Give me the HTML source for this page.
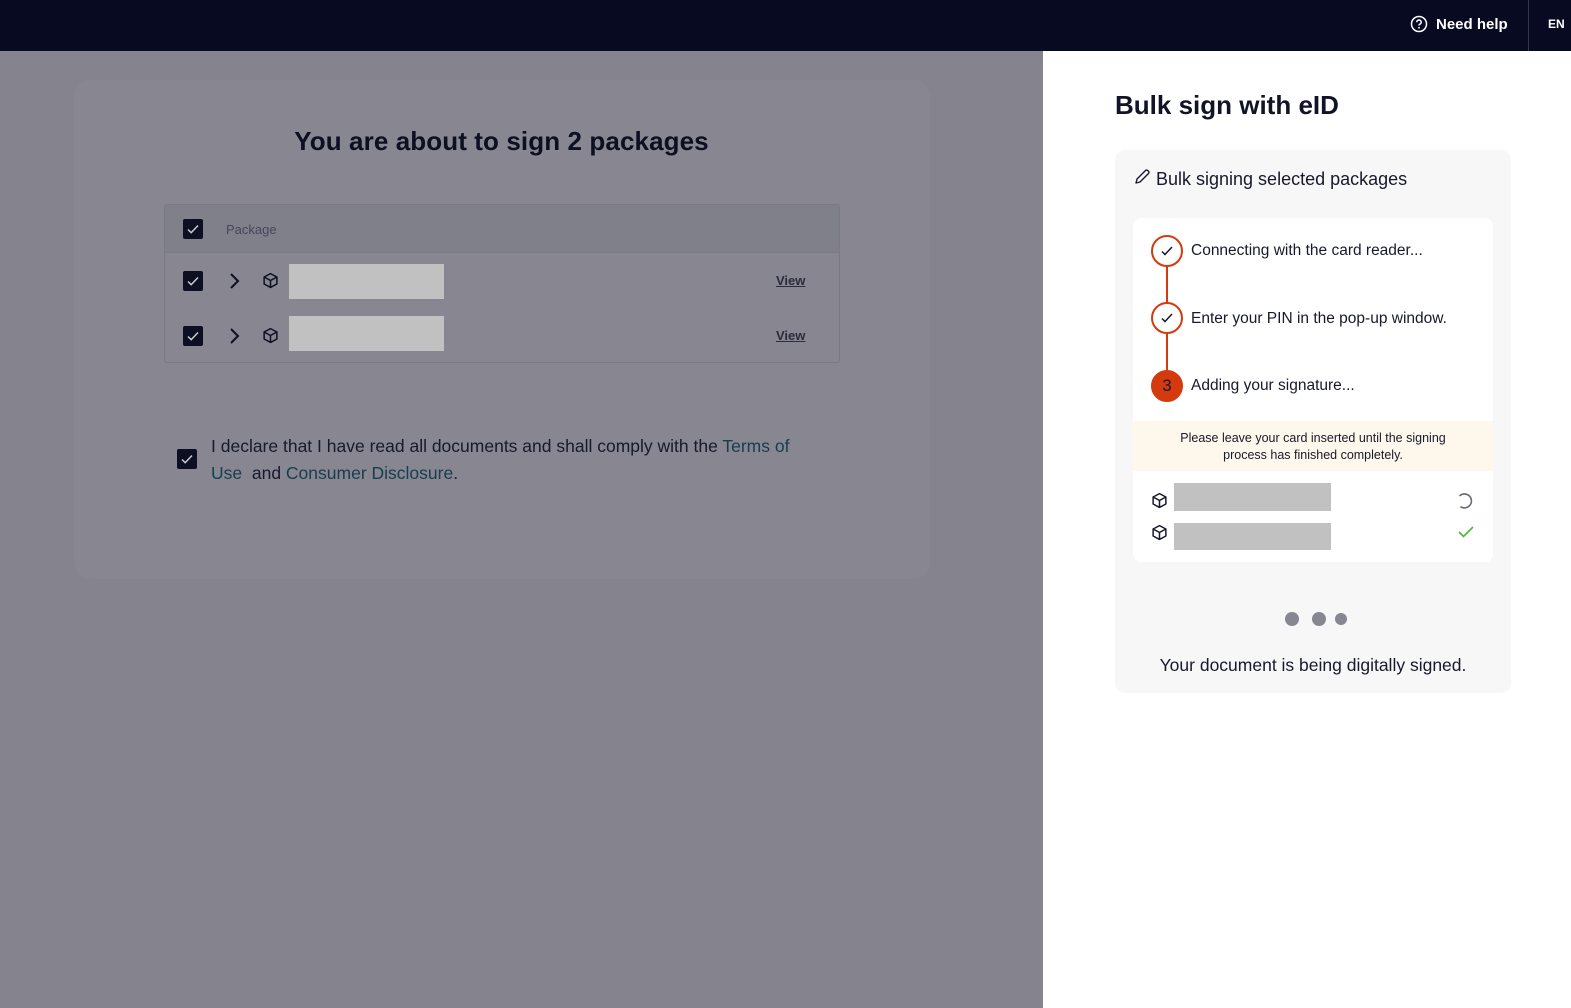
<!DOCTYPE html>
<html><head><meta charset="utf-8">
<style>
*{box-sizing:border-box;margin:0;padding:0}
body{width:1571px;height:1008px;overflow:hidden;font-family:"Liberation Sans",sans-serif;background:#84838e;position:relative}
.top{position:absolute;left:0;top:0;width:1571px;height:51px;background:#070a20;color:#fff}
.help{position:absolute;left:1410px;top:15px;font-weight:bold;font-size:15px;display:flex;align-items:center;gap:8px}
.sep{position:absolute;left:1528px;top:0;width:1px;height:51px;background:#333649}
.en{position:absolute;left:1548px;top:17px;font-weight:bold;font-size:12px}
.left{position:absolute;left:0;top:51px;width:1043px;height:957px;background:#84838e}
.card{position:absolute;left:74px;top:80px;width:856px;height:499px;background:#878691;border-radius:16px}
h1{position:absolute;left:0;width:1003px;top:126px;text-align:center;font-size:26px;font-weight:bold;color:#0d0f22;letter-spacing:0.1px}
.tbl{position:absolute;left:164px;top:204px;width:676px;height:159px;border:1px solid #7a7985;border-radius:3px;background:#878691}
.hdr{height:48px;background:#80808b;border-bottom:1px solid #7c7b87}
.cb{position:absolute;width:20px;height:20px;background:#0d0f22;border-radius:2px}
.cb svg{position:absolute;left:2px;top:2px}
.blk{position:absolute;background:#c1c1c1}
.view{position:absolute;left:776px;font-size:13px;color:#2a2c3c;text-decoration:underline;font-weight:bold}
.decl{position:absolute;left:211px;top:433px;width:615px;font-size:17.5px;line-height:27px;color:#171a2c}
.decl a{color:#163e4e;text-decoration:none}
.right{position:absolute;left:1043px;top:51px;width:528px;height:957px;background:#fff}
h2{position:absolute;left:1115px;top:90px;font-size:26px;font-weight:bold;color:#111326}
.panel{position:absolute;left:1115px;top:150px;width:396px;height:543px;background:#f7f7f7;border-radius:10px}
.ptitle{position:absolute;left:1156px;top:169px;font-size:18px;color:#17192c}
.inner{position:absolute;left:1133px;top:218px;width:360px;height:344px;background:#fff;border-radius:8px;overflow:hidden}
.step{position:absolute;left:1191px;font-size:15.5px;color:#17192c}
.circ{position:absolute;left:1151px;width:32px;height:32px;border:2px solid #d53a0f;border-radius:50%;background:#fff}
.line{position:absolute;left:1166px;width:2px;background:#d53a0f}
.warn{position:absolute;left:1133px;top:421px;width:360px;height:50px;background:#fef7eb;font-size:12.5px;text-align:center;color:#17192c;padding-top:9px;line-height:17px}
.dot{position:absolute;border-radius:50%;background:#878793}
</style></head><body>
<div class="top">
  <div class="help"><svg width="18" height="18" viewBox="0 0 18 18"><circle cx="9" cy="9" r="7.5" fill="none" stroke="#fff" stroke-width="1.5"/><path d="M6.8 7.2a2.2 2.2 0 1 1 3 2c-.6.3-.8.7-.8 1.3" fill="none" stroke="#fff" stroke-width="1.5"/><circle cx="9" cy="12.8" r="0.9" fill="#fff"/></svg>Need help</div>
  <div class="sep"></div><div class="en">EN</div>
</div>
<div class="left"></div>
<div class="card"></div>
<h1>You are about to sign 2 packages</h1>
<div class="tbl"><div class="hdr"></div></div>
<div class="cb" style="left:183px;top:219px"><svg width="16" height="16" viewBox="0 0 16 16"><path d="M3 8.5l3.2 3.2L13 4.5" fill="none" stroke="#c9c9d0" stroke-width="1.5"/></svg></div>
<div style="position:absolute;left:226px;top:222px;font-size:13px;color:#45475a">Package</div>
<div class="cb" style="left:183px;top:271px"><svg width="16" height="16" viewBox="0 0 16 16"><path d="M3 8.5l3.2 3.2L13 4.5" fill="none" stroke="#c9c9d0" stroke-width="1.5"/></svg></div>
<div class="cb" style="left:183px;top:326px"><svg width="16" height="16" viewBox="0 0 16 16"><path d="M3 8.5l3.2 3.2L13 4.5" fill="none" stroke="#c9c9d0" stroke-width="1.5"/></svg></div>
<svg style="position:absolute;left:228px;top:272px" width="12" height="18" viewBox="0 0 12 18"><path d="M3 2l7 7-7 7" fill="none" stroke="#0d0f22" stroke-width="2"/></svg>
<svg style="position:absolute;left:228px;top:327px" width="12" height="18" viewBox="0 0 12 18"><path d="M3 2l7 7-7 7" fill="none" stroke="#0d0f22" stroke-width="2"/></svg>
<svg style="position:absolute;left:262px;top:272px" width="17" height="17" viewBox="0 0 16 16"><path d="M8 1.5l6 3.2v6.6L8 14.5 2 11.3V4.7z M2 4.7L8 8l6-3.3 M8 8v6.5" fill="none" stroke="#0d0f22" stroke-width="1.4" stroke-linejoin="round"/></svg>
<svg style="position:absolute;left:262px;top:327px" width="17" height="17" viewBox="0 0 16 16"><path d="M8 1.5l6 3.2v6.6L8 14.5 2 11.3V4.7z M2 4.7L8 8l6-3.3 M8 8v6.5" fill="none" stroke="#0d0f22" stroke-width="1.4" stroke-linejoin="round"/></svg>
<div class="blk" style="left:289px;top:264px;width:155px;height:35px"></div>
<div class="blk" style="left:289px;top:316px;width:155px;height:35px"></div>
<div class="view" style="top:273px">View</div>
<div class="view" style="top:328px">View</div>
<div class="cb" style="left:177px;top:449px"><svg width="16" height="16" viewBox="0 0 16 16"><path d="M3 8.5l3.2 3.2L13 4.5" fill="none" stroke="#c9c9d0" stroke-width="1.5"/></svg></div>
<div class="decl">I declare that I have read all documents and shall comply with the <a>Terms of Use</a>&nbsp; and <a>Consumer Disclosure</a>.</div>

<div class="right"></div>
<h2>Bulk sign with eID</h2>
<div class="panel"></div>
<svg style="position:absolute;left:1133px;top:168px" width="18" height="18" viewBox="0 0 18 18"><path d="M3 15l1-4L12.5 2.5a1.5 1.5 0 0 1 2.2 0l.8.8a1.5 1.5 0 0 1 0 2.2L7 14z" fill="none" stroke="#17192c" stroke-width="1.4" stroke-linejoin="round"/></svg>
<div class="ptitle">Bulk signing selected packages</div>
<div class="inner"></div>
<div class="line" style="top:266px;height:38px"></div>
<div class="line" style="top:333px;height:40px"></div>
<div class="circ" style="top:235px"><svg style="position:absolute;left:6px;top:6px" width="16" height="16" viewBox="0 0 16 16"><path d="M3 8.5l3 3L13 4" fill="none" stroke="#17192c" stroke-width="1.5"/></svg></div>
<div class="circ" style="top:302px"><svg style="position:absolute;left:6px;top:6px" width="16" height="16" viewBox="0 0 16 16"><path d="M3 8.5l3 3L13 4" fill="none" stroke="#17192c" stroke-width="1.5"/></svg></div>
<div class="circ" style="top:370px;background:#d53a0f;text-align:center;font-size:17px;line-height:28px;color:#17192c">3</div>
<div class="step" style="top:242px">Connecting with the card reader...</div>
<div class="step" style="top:310px">Enter your PIN in the pop-up window.</div>
<div class="step" style="top:377px">Adding your signature...</div>
<div class="warn">Please leave your card inserted until the signing<br>process has finished completely.</div>
<svg style="position:absolute;left:1151px;top:492px" width="17" height="17" viewBox="0 0 16 16"><path d="M8 1.5l6 3.2v6.6L8 14.5 2 11.3V4.7z M2 4.7L8 8l6-3.3 M8 8v6.5" fill="none" stroke="#17192c" stroke-width="1.4" stroke-linejoin="round"/></svg>
<svg style="position:absolute;left:1151px;top:524px" width="17" height="17" viewBox="0 0 16 16"><path d="M8 1.5l6 3.2v6.6L8 14.5 2 11.3V4.7z M2 4.7L8 8l6-3.3 M8 8v6.5" fill="none" stroke="#17192c" stroke-width="1.4" stroke-linejoin="round"/></svg>
<div class="blk" style="left:1174px;top:483px;width:157px;height:28px"></div>
<div class="blk" style="left:1174px;top:523px;width:157px;height:27px"></div>
<svg style="position:absolute;left:1456px;top:492px" width="18" height="18" viewBox="0 0 18 18"><path d="M4 3.5A7 7 0 1 1 5 15" fill="none" stroke="#6a6a75" stroke-width="1.6" stroke-linecap="round"/></svg>
<svg style="position:absolute;left:1457px;top:525px" width="18" height="14" viewBox="0 0 18 14"><path d="M2 7l4.5 4.5L16 2" fill="none" stroke="#4cb83a" stroke-width="1.6"/></svg>
<div class="dot" style="left:1285px;top:612px;width:14px;height:14px"></div>
<div class="dot" style="left:1312px;top:612px;width:14px;height:14px"></div>
<div class="dot" style="left:1335px;top:613px;width:12px;height:12px"></div>
<div style="position:absolute;left:1115px;width:396px;top:655px;text-align:center;font-size:17.5px;color:#17192c">Your document is being digitally signed.</div>
</body></html>
